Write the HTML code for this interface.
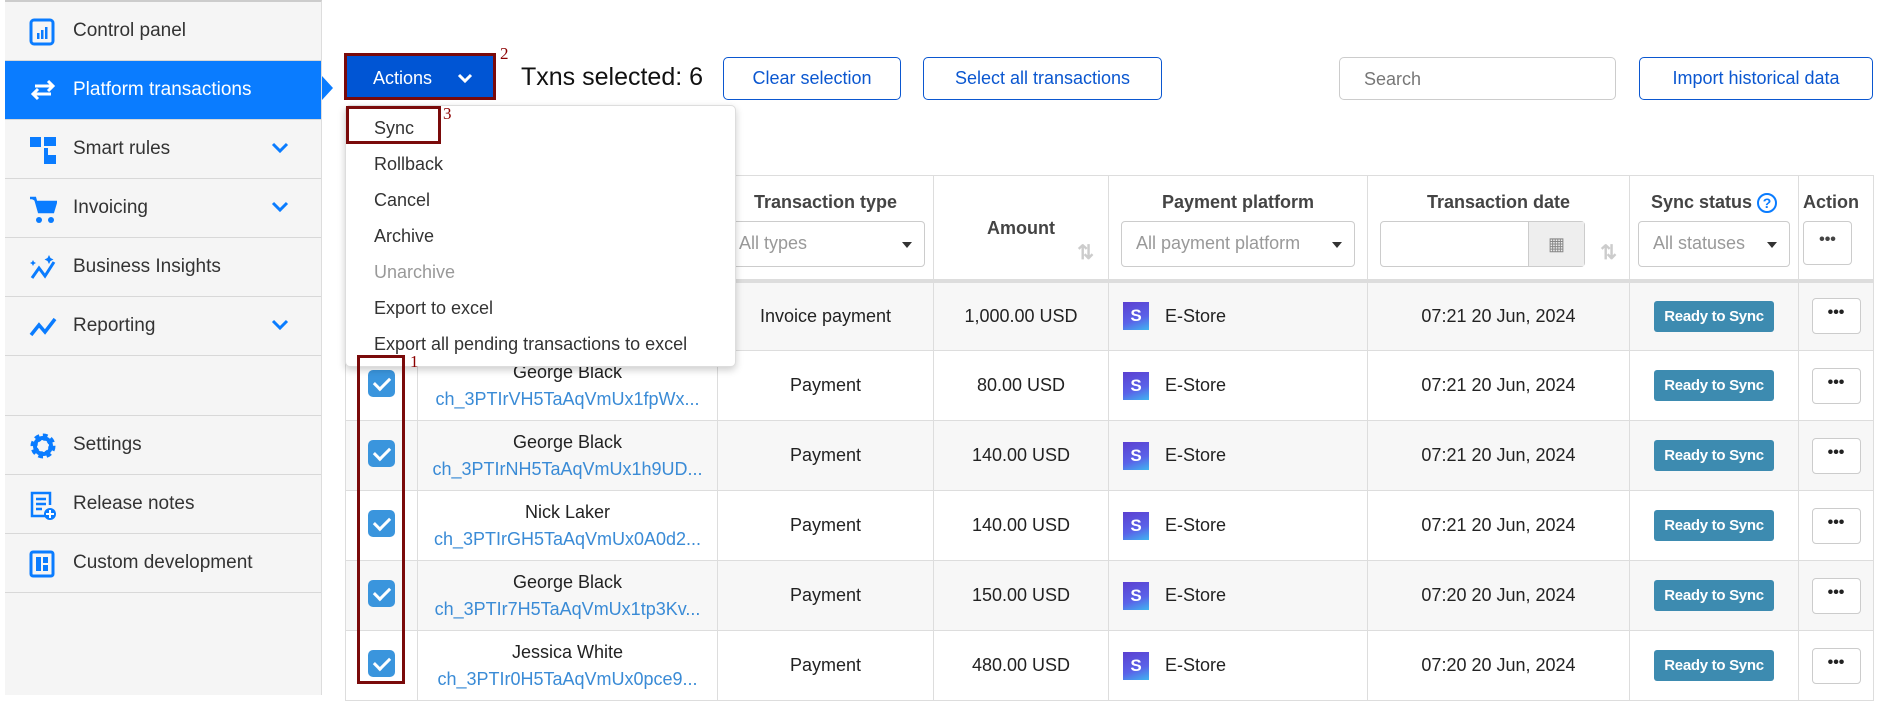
<!DOCTYPE html>
<html><head><meta charset="utf-8"><style>
*{box-sizing:border-box;margin:0;padding:0}
body{width:1892px;height:695px;overflow:hidden;background:#fff;font-family:"Liberation Sans",Arial,sans-serif;color:#222;position:relative}
.abs{position:absolute}
#side{left:5px;top:0;width:317px;height:695px;background:#f5f5f5;border-right:1px solid #ddd;border-top:2px solid #ccc}
.it{position:absolute;left:0;width:316px;height:59px;border-bottom:1px solid #d8d8d8;font-size:19px;color:#333;display:flex;align-items:center;padding-left:68px}
.it svg{position:absolute;left:24px;top:16px}
.it .chev{left:auto;right:32px;top:22px}
.it.act{background:#0a7cff;color:#fff}
.btn{position:absolute;border:1.5px solid #0b57d0;border-radius:5px;color:#0b57d0;font-size:18px;display:flex;align-items:center;justify-content:center;background:#fff}
table{position:absolute;left:345px;top:175px;border-collapse:collapse;table-layout:fixed;width:1528px}
td,th{border:1px solid #ddd;text-align:center;font-size:18px;font-weight:normal}
th{height:105px;color:#444;font-weight:bold;font-size:18px;vertical-align:top;padding-top:16px;position:relative;border-bottom:4px solid #ddd}
tbody tr{height:70px}
tbody tr:nth-child(odd){background:#f7f7f7}
.cb{display:inline-block;width:27px;height:27px;border-radius:5px;background:#3a95dd;position:relative}
.cb:after{content:"";position:absolute;left:9px;top:4px;width:7px;height:13px;border:solid #fff;border-width:0 3px 3px 0;transform:rotate(45deg)}
.id{color:#3a8bd6;font-size:18px;margin-top:6px}
.sel{position:absolute;left:6px;right:8px;top:45px;height:46px;border:1px solid #ccc;border-radius:4px;color:#999;font-weight:normal;text-align:left;padding:11px 14px;font-size:18px}
.sel .car{position:absolute;right:12px;top:20px;border:5px solid transparent;border-top:6px solid #333}
.es{display:flex;align-items:center;padding-left:14px;gap:16px}
.sq{width:26px;height:28px;background:linear-gradient(160deg,#5b3fd0,#5a62e8 60%,#3fb6f0);color:#fff;font-weight:bold;font-size:17px;display:flex;align-items:center;justify-content:center}
.bd{display:inline-block;background:#3d8bb0;color:#fff;font-weight:bold;font-size:15px;padding:7px 10px;border-radius:3px;letter-spacing:-.3px}
.dots{display:inline-block;width:49px;height:36px;border:1px solid #ccc;border-radius:4px;background:#fff;font-weight:bold;line-height:28px;font-size:16px}
#menu{left:345px;top:105px;width:391px;height:262px;background:#fff;border:1px solid #ddd;border-radius:5px;box-shadow:0 3px 8px rgba(0,0,0,.2)}
#menu div{position:absolute;left:28px;font-size:18px;color:#333}
.red{position:absolute;border:3px solid #7a0a0a}
.num{position:absolute;color:#8b0000;font-family:"Liberation Serif",serif;font-size:17px}
</style></head><body>
<div id="side" class="abs">
 <div class="it" style="top:0"><svg width="26" height="28" viewBox="0 0 26 28"><rect x="2" y="2" width="22" height="24" rx="3" fill="none" stroke="#0a7cff" stroke-width="3"/><rect x="8" y="15" width="2.5" height="6" fill="#0a7cff"/><rect x="12" y="12" width="2.5" height="9" fill="#0a7cff"/><rect x="16" y="9" width="2.5" height="12" fill="#0a7cff"/></svg>Control panel</div>
 <div class="it act" style="top:59px"><svg width="28" height="26" viewBox="0 0 28 26"><path d="M6 9h18M19 4l5 5-5 5M22 17H4M9 12l-5 5 5 5" fill="none" stroke="#fff" stroke-width="3"/></svg>Platform transactions</div>
 <div class="it" style="top:118px"><svg width="28" height="28" viewBox="0 0 28 28"><rect x="1" y="1" width="11" height="10" fill="#0a7cff"/><rect x="15" y="1" width="12" height="9" fill="#0a7cff"/><rect x="15" y="12" width="4" height="14" fill="#0a7cff"/><rect x="15" y="19" width="12" height="9" fill="#0a7cff"/></svg>Smart rules<svg class="chev" width="18" height="12" viewBox="0 0 18 12"><path d="M2 2l7 7 7-7" fill="none" stroke="#0a7cff" stroke-width="3"/></svg></div>
 <div class="it" style="top:177px"><svg width="28" height="30" viewBox="0 0 28 30"><path d="M1 3h5l4 14h14l3-10H8" fill="#0a7cff" stroke="#0a7cff" stroke-width="2.5"/><circle cx="10" cy="25" r="3" fill="#0a7cff"/><circle cx="22" cy="25" r="3" fill="#0a7cff"/></svg>Invoicing<svg class="chev" width="18" height="12" viewBox="0 0 18 12"><path d="M2 2l7 7 7-7" fill="none" stroke="#0a7cff" stroke-width="3"/></svg></div>
 <div class="it" style="top:236px"><svg width="30" height="28" viewBox="0 0 30 28"><path d="M3 24l7-10 6 8 9-14" fill="none" stroke="#0a7cff" stroke-width="3"/><path d="M20 1l1.5 3 3 1.5-3 1.5-1.5 3-1.5-3-3-1.5 3-1.5z M4 6l1 2 2 1-2 1-1 2-1-2-2-1 2-1z" fill="#0a7cff"/></svg>Business Insights</div>
 <div class="it" style="top:295px"><svg width="28" height="26" viewBox="0 0 28 26"><path d="M2 22l8-10 6 7 10-13" fill="none" stroke="#0a7cff" stroke-width="3.5"/></svg>Reporting<svg class="chev" width="18" height="12" viewBox="0 0 18 12"><path d="M2 2l7 7 7-7" fill="none" stroke="#0a7cff" stroke-width="3"/></svg></div>
 <div class="it" style="top:354px;height:60px"></div>
 <div class="it" style="top:414px"><svg width="28" height="28" viewBox="0 0 28 28"><circle cx="14" cy="14" r="9" fill="none" stroke="#0a7cff" stroke-width="7" stroke-dasharray="4 3"/><circle cx="14" cy="14" r="8" fill="none" stroke="#0a7cff" stroke-width="4"/></svg>Settings</div>
 <div class="it" style="top:473px"><svg width="28" height="30" viewBox="0 0 28 30"><path d="M17 25H3V2h18v12" fill="none" stroke="#0a7cff" stroke-width="2.5"/><path d="M7 8h10M7 13h10M7 18h6" stroke="#0a7cff" stroke-width="2.5"/><circle cx="21" cy="23" r="6" fill="#0a7cff"/><path d="M21 19v8M17 23h8" stroke="#fff" stroke-width="2"/></svg>Release notes</div>
 <div class="it" style="top:532px"><svg width="28" height="28" viewBox="0 0 28 28"><rect x="2" y="2" width="22" height="24" rx="2" fill="none" stroke="#0a7cff" stroke-width="3"/><rect x="7" y="7" width="5" height="14" fill="#0a7cff"/><rect x="14" y="7" width="5" height="6" fill="#0a7cff"/><rect x="14" y="15" width="5" height="6" fill="#0a7cff"/></svg>Custom development</div>
</div>
<div class="abs" style="left:322px;top:76px;width:0;height:0;border-top:12px solid transparent;border-bottom:12px solid transparent;border-left:11px solid #0a7cff"></div>

<div class="abs" style="left:344px;top:53px;width:152px;height:47px;background:#0055d4;border:3px solid #7a0a0a;color:#fff;font-size:18px;padding:12px 0 0 26px">Actions<svg style="position:absolute;left:110px;top:17px" width="16" height="11" viewBox="0 0 16 11"><path d="M2 2l6 6 6-6" fill="none" stroke="#fff" stroke-width="3"/></svg></div>
<div class="num" style="left:500px;top:44px">2</div>
<div class="abs" style="left:521px;top:63px;font-size:25px;color:#111">Txns selected: 6</div>
<div class="btn" style="left:723px;top:57px;width:178px;height:43px">Clear selection</div>
<div class="btn" style="left:923px;top:57px;width:239px;height:43px">Select all transactions</div>
<div class="abs" style="left:1339px;top:57px;width:277px;height:43px;border:1px solid #ccc;border-radius:5px;color:#777;font-size:18px;padding:11px 24px">Search</div>
<div class="btn" style="left:1639px;top:57px;width:234px;height:43px">Import historical data</div>

<table>
<colgroup><col style="width:72px"><col style="width:300px"><col style="width:216px"><col style="width:175px"><col style="width:259px"><col style="width:262px"><col style="width:169px"><col style="width:75px"></colgroup>
<thead><tr><th></th><th></th><th>Transaction type<div class="sel">All types<span class="car"></span></div></th>
<th style="padding-top:42px">Amount<span style="position:absolute;right:14px;bottom:14px;color:#ccc;font-size:20px">⇅</span></th>
<th>Payment platform<div class="sel" style="left:12px;right:12px">All payment platform<span class="car"></span></div></th>
<th>Transaction date<div class="sel" style="right:44px;left:12px;padding:0"><span style="position:absolute;right:0;top:0;width:56px;height:44px;background:#eee;border-left:1px solid #ccc;color:#888;text-align:center;line-height:44px">▦</span></div><span style="position:absolute;right:12px;bottom:14px;color:#ccc;font-size:20px">⇅</span></th>
<th>Sync status <span style="color:#0a7cff;border:2px solid #0a7cff;border-radius:50%;display:inline-block;width:20px;height:20px;font-size:14px;line-height:16px">?</span><div class="sel" style="left:8px;right:8px">All statuses<span class="car"></span></div></th>
<th style="text-align:left;padding-left:4px">Action<div class="dots" style="position:absolute;left:4px;top:45px;height:44px;line-height:36px;text-align:center">•••</div></th></tr></thead>
<tbody>
<tr><td></td><td></td><td>Invoice payment</td><td>1,000.00 USD</td><td><div class="es"><span class="sq">S</span>E-Store</div></td><td>07:21 20 Jun, 2024</td><td><span class="bd">Ready to Sync</span></td><td><span class="dots">•••</span></td></tr>
<tr><td><span class="cb"></span></td><td>George Black<div class="id">ch_3PTIrVH5TaAqVmUx1fpWx...</div></td><td>Payment</td><td>80.00 USD</td><td><div class="es"><span class="sq">S</span>E-Store</div></td><td>07:21 20 Jun, 2024</td><td><span class="bd">Ready to Sync</span></td><td><span class="dots">•••</span></td></tr>
<tr><td><span class="cb"></span></td><td>George Black<div class="id">ch_3PTIrNH5TaAqVmUx1h9UD...</div></td><td>Payment</td><td>140.00 USD</td><td><div class="es"><span class="sq">S</span>E-Store</div></td><td>07:21 20 Jun, 2024</td><td><span class="bd">Ready to Sync</span></td><td><span class="dots">•••</span></td></tr>
<tr><td><span class="cb"></span></td><td>Nick Laker<div class="id">ch_3PTIrGH5TaAqVmUx0A0d2...</div></td><td>Payment</td><td>140.00 USD</td><td><div class="es"><span class="sq">S</span>E-Store</div></td><td>07:21 20 Jun, 2024</td><td><span class="bd">Ready to Sync</span></td><td><span class="dots">•••</span></td></tr>
<tr><td><span class="cb"></span></td><td>George Black<div class="id">ch_3PTIr7H5TaAqVmUx1tp3Kv...</div></td><td>Payment</td><td>150.00 USD</td><td><div class="es"><span class="sq">S</span>E-Store</div></td><td>07:20 20 Jun, 2024</td><td><span class="bd">Ready to Sync</span></td><td><span class="dots">•••</span></td></tr>
<tr><td><span class="cb"></span></td><td>Jessica White<div class="id">ch_3PTIr0H5TaAqVmUx0pce9...</div></td><td>Payment</td><td>480.00 USD</td><td><div class="es"><span class="sq">S</span>E-Store</div></td><td>07:20 20 Jun, 2024</td><td><span class="bd">Ready to Sync</span></td><td><span class="dots">•••</span></td></tr>
</tbody></table>

<div id="menu" class="abs">
 <div style="top:12px">Sync</div><div style="top:48px">Rollback</div><div style="top:84px">Cancel</div><div style="top:120px">Archive</div><div style="top:156px;color:#999">Unarchive</div><div style="top:192px">Export to excel</div><div style="top:228px">Export all pending transactions to excel</div>
</div>
<div class="red" style="left:346px;top:106px;width:95px;height:38px"></div>
<div class="num" style="left:443px;top:104px">3</div>
<div class="red" style="left:357px;top:355px;width:48px;height:329px"></div>
<div class="num" style="left:410px;top:352px">1</div>
</body></html>
